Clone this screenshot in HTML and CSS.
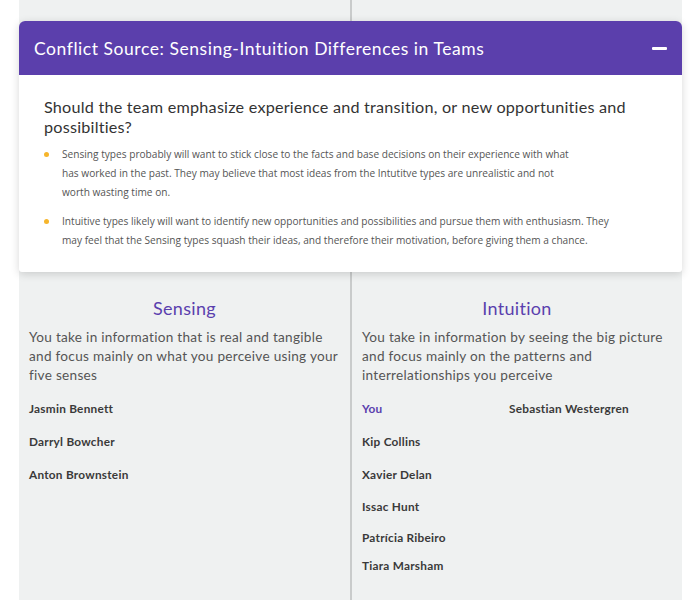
FILE: index.html
```html
<!DOCTYPE html>
<html>
<head>
<meta charset="utf-8">
<link rel="stylesheet" href="styles.css">
</head>
<body>
<div class="panel">
  <div class="columns">
    <section class="col">
      <h2 class="col-title">Sensing</h2>
      <p class="col-desc">You take in information that is real and tangible and focus mainly on what you perceive using your five senses</p>
      <ul class="names">
        <li class="name">Jasmin Bennett</li>
        <li class="name">Darryl Bowcher</li>
        <li class="name">Anton Brownstein</li>
      </ul>
    </section>
    <section class="col col-right">
      <h2 class="col-title">Intuition</h2>
      <p class="col-desc">You take in information by seeing the big picture and focus mainly on the patterns and interrelationships you perceive</p>
      <ul class="names names-grid">
        <li class="name you">You</li>
        <li class="name">Sebastian Westergren</li>
        <li class="name">Kip Collins</li>
        <li class="name">Xavier Delan</li>
        <li class="name n-tight">Issac Hunt</li>
        <li class="name n-tighter">Patrícia Ribeiro</li>
        <li class="name n-tightest">Tiara Marsham</li>
      </ul>
    </section>
  </div>

  <div class="card">
    <div class="card-head">
      <span class="card-title">Conflict Source: Sensing-Intuition Differences in Teams</span>
      <span class="minus"></span>
    </div>
    <div class="card-body">
      <h3 class="question">Should the team emphasize experience and transition, or new opportunities and possibilties?</h3>
      <ul class="bullets">
        <li>Sensing types probably will want to stick close to the facts and base decisions on their experience with what<br>has worked in the past. They may believe that most ideas from the Intutitve types are unrealistic and not<br>worth wasting time on.</li>
        <li>Intuitive types likely will want to identify new opportunities and possibilities and pursue them with enthusiasm. They<br>may feel that the Sensing types squash their ideas, and therefore their motivation, before giving them a chance.</li>
      </ul>
    </div>
  </div>
</div>
</body>
</html>
```

FILE: styles.css
```css
* { box-sizing: border-box; }
html, body { margin: 0; padding: 0; background: #ffffff; }
body { font-family: "Lato", "Liberation Sans", sans-serif; color: #444; }

.panel {
  position: relative;
  margin: 0 18px 0 19px;
  background: #eff1f1;
  min-height: 600px;
}

.columns {
  display: grid;
  grid-template-columns: 331px 1fr;
  min-height: 600px;
}
.col {
  padding: 296px 10px 0 10px;
}
.col-right {
  border-left: 2px solid #c9cbcb;
  padding-left: 10px;
}
.col-title {
  margin: 0;
  text-align: center;
  font-weight: 400;
  font-size: 18px;
  line-height: 24px;
  letter-spacing: 0.3px;
  color: #5a3fae;
}
.col-desc {
  margin: 8px 0 0 0;
  font-size: 13.6px;
  line-height: 19px;
  letter-spacing: 0.28px;
  color: #555;
}
.names {
  list-style: none;
  margin: 16px 0 0 0;
  padding: 0;
}
.name {
  font-size: 11.8px;
  font-weight: 700;
  line-height: 16px;
  letter-spacing: 0.25px;
  color: #3a3a3a;
  margin-bottom: 17px;
}
.names-grid {
  display: grid;
  grid-template-columns: 147px 1fr;
}
.names-grid .name:nth-child(n+3) { grid-column: 1; }
.you { color: #5a3fae; }
.n-tight { margin-top: -1px; }
.n-tighter { margin-top: -2px; }
.n-tightest { margin-top: -5px; }

.card {
  position: absolute;
  top: 21px;
  left: 0;
  right: 0;
  background: #ffffff;
  border-radius: 6px 6px 3px 3px;
  box-shadow: 0 2px 8px rgba(0, 0, 0, 0.16);
}
.card-head {
  height: 54px;
  background: #5b3fac;
  border-radius: 6px 6px 0 0;
  display: flex;
  align-items: center;
  justify-content: space-between;
  padding: 0 15px 0 15px;
}
.card-title {
  color: #ffffff;
  font-size: 17.5px;
  letter-spacing: 0.55px;
}
.minus {
  width: 15px;
  height: 3px;
  background: #ffffff;
  border-radius: 1px;
}
.card-body {
  padding: 22px 25px 22px 25px;
}
.question {
  margin: 0;
  font-weight: 400;
  font-size: 16.2px;
  line-height: 20px;
  letter-spacing: 0.22px;
  color: #333;
}
.bullets {
  list-style: none;
  margin: 8px 0 0 0;
  padding: 0;
  font-family: "Open Sans", "Liberation Sans", sans-serif;
  font-size: 10.15px;
  line-height: 19px;
  color: #555;
}
.bullets li {
  position: relative;
  padding-left: 18px;
  margin-bottom: 10px;
}
.bullets li:last-child { margin-bottom: 0; }
.bullets li::before {
  content: "";
  position: absolute;
  left: 0;
  top: 7px;
  width: 5px;
  height: 5px;
  border-radius: 50%;
  background: #f6b52b;
}
```
